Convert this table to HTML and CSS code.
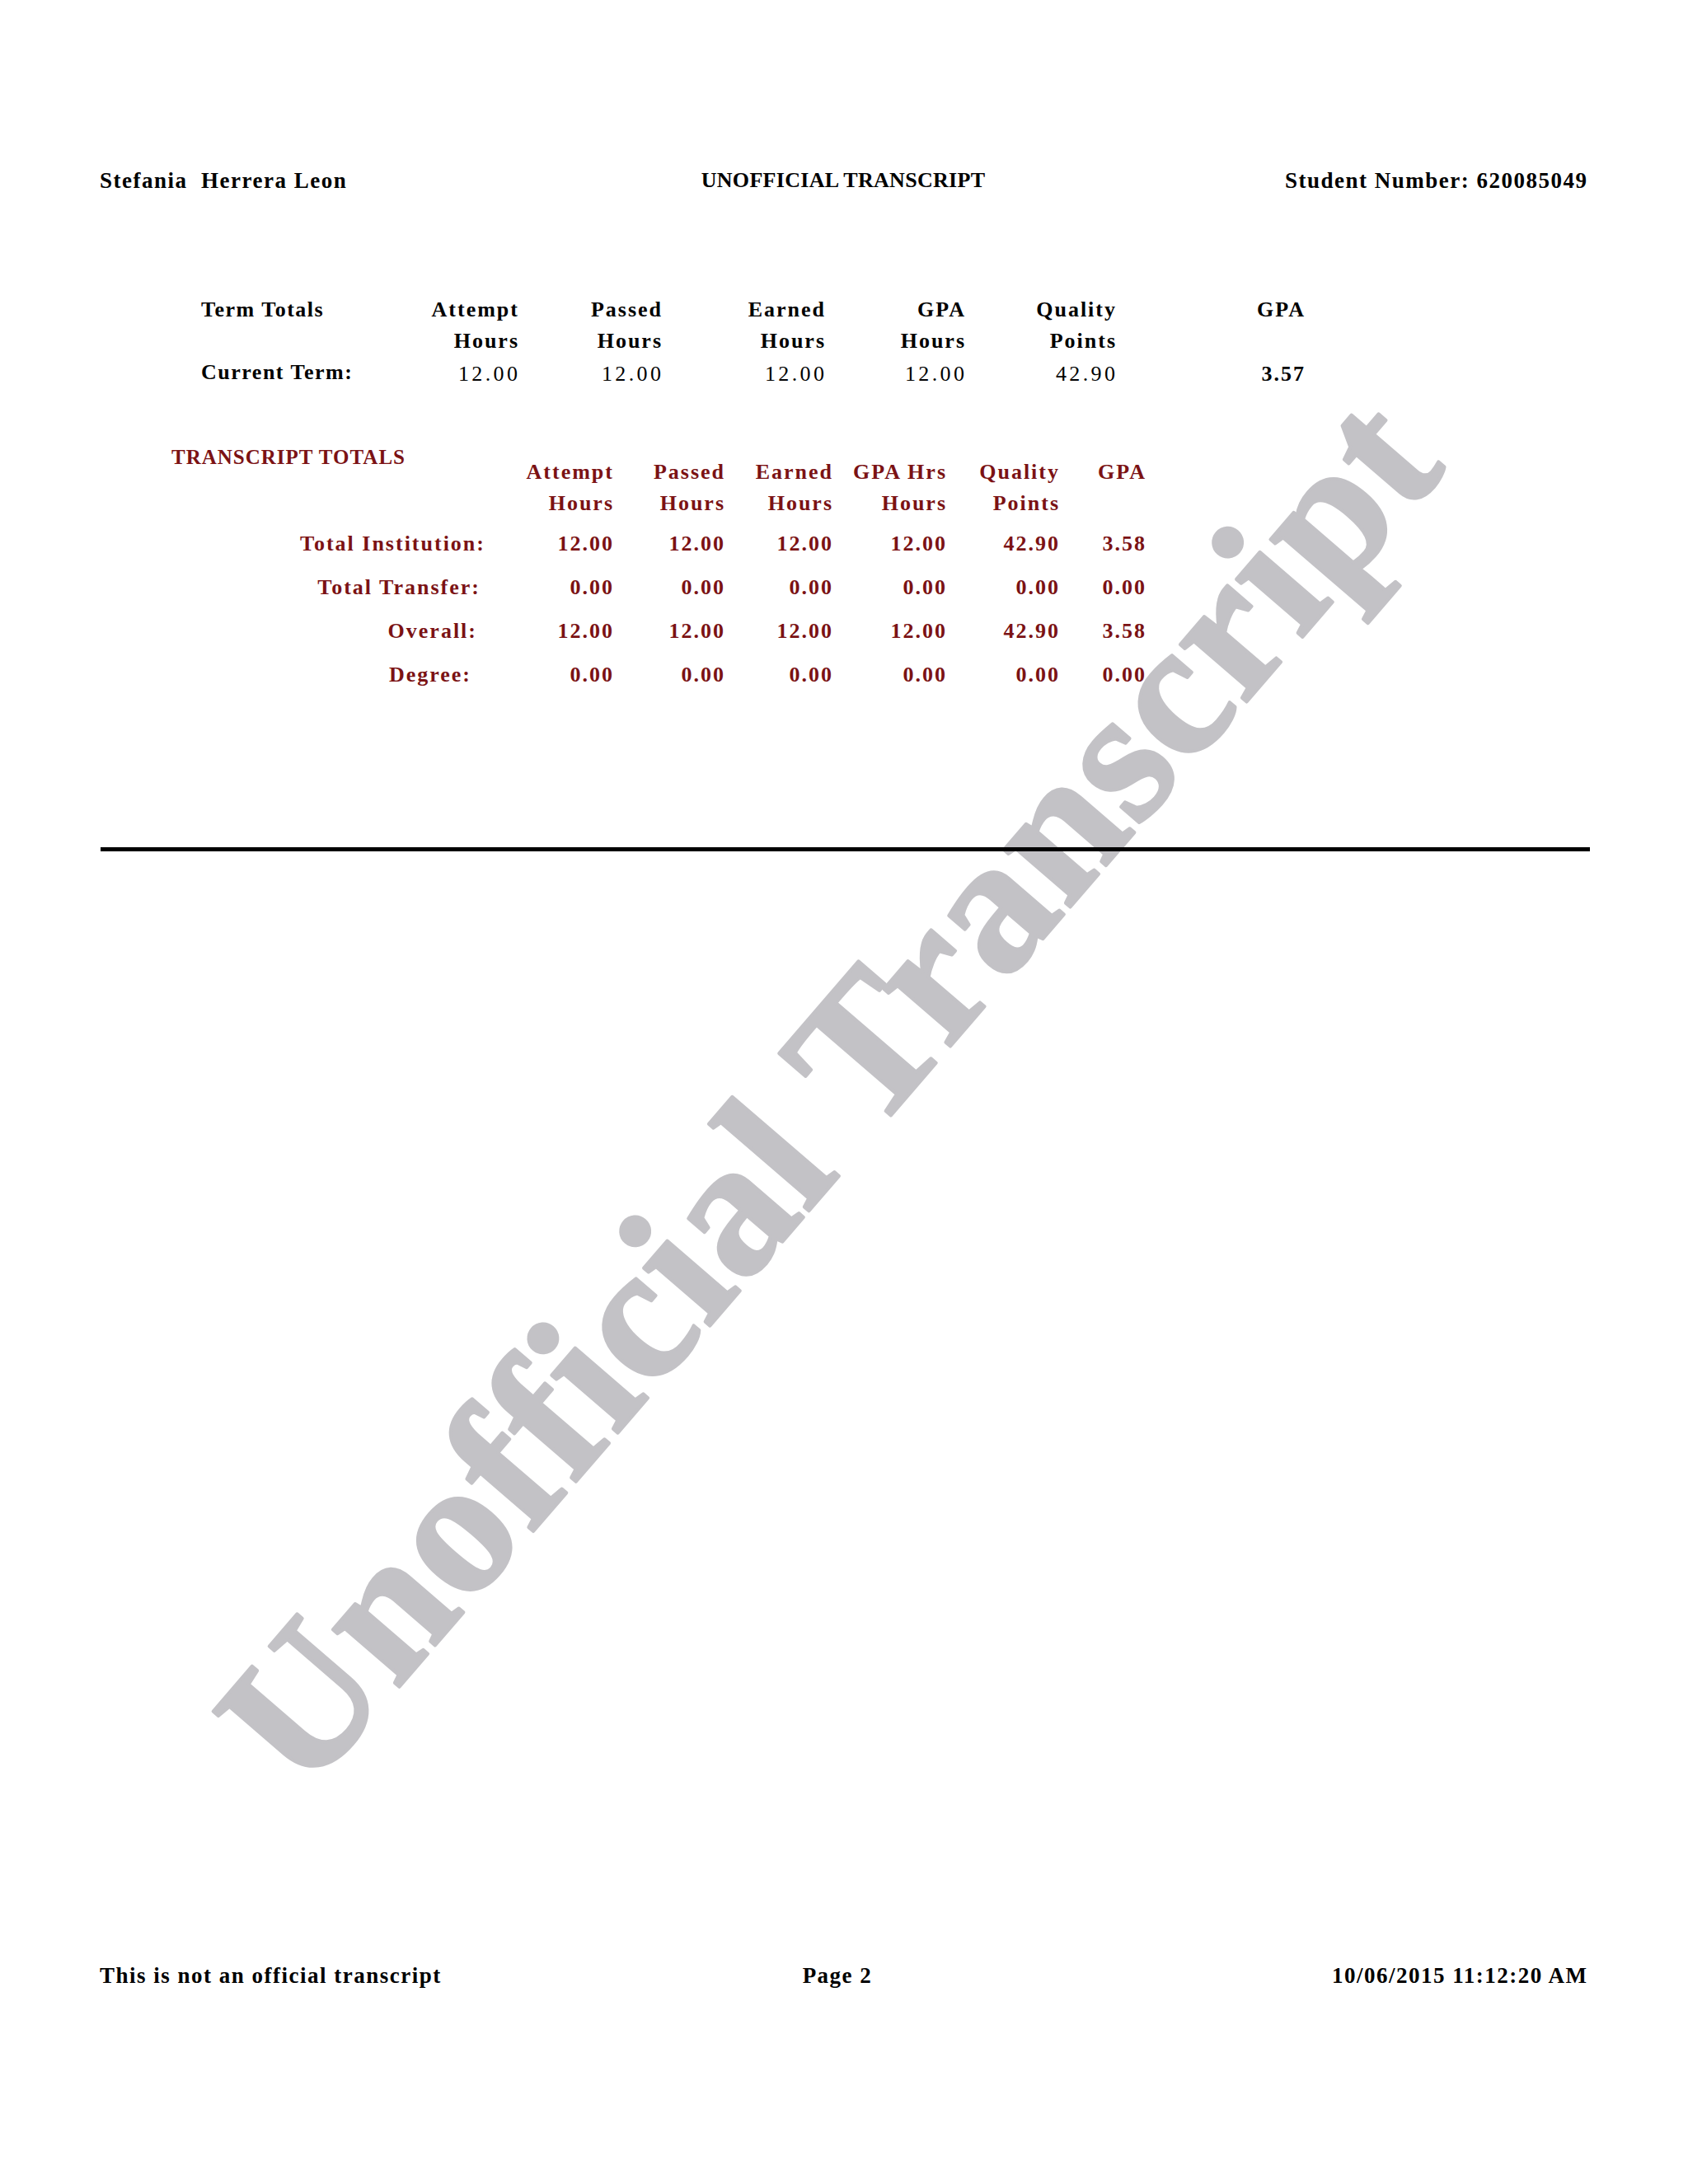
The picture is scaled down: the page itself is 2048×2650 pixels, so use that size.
FILE: index.html
```html
<!DOCTYPE html>
<html lang="en">
<head>
<meta charset="utf-8">
<title>Unofficial Transcript - Page 2</title>
<link rel="stylesheet" href="styles.css">
</head>
<body>
<div class="page">
  <svg class="watermark" width="2048" height="2650" viewBox="0 0 2048 2650" aria-hidden="true">
    <text class="wm-text" x="370" y="2180" transform="rotate(-49.3 370 2180)">Unofficial Transcript</text>
  </svg>

  <header class="page-head">
    <div class="ph-left">Stefania&nbsp; Herrera Leon</div>
    <div class="ph-center">UNOFFICIAL TRANSCRIPT</div>
    <div class="ph-right">Student Number: 620085049</div>
  </header>

  <section class="term">
    <div class="t-label">Term Totals</div>
    <div class="t-head">Attempt<br>Hours</div>
    <div class="t-head">Passed<br>Hours</div>
    <div class="t-head">Earned<br>Hours</div>
    <div class="t-head">GPA<br>Hours</div>
    <div class="t-head">Quality<br>Points</div>
    <div class="t-head">GPA</div>

    <div class="t-label">Current Term:</div>
    <div class="t-num">12.00</div>
    <div class="t-num">12.00</div>
    <div class="t-num">12.00</div>
    <div class="t-num">12.00</div>
    <div class="t-num">42.90</div>
    <div class="t-gpa">3.57</div>
  </section>

  <section class="totals">
    <div class="tt-title">TRANSCRIPT TOTALS</div>
    <div class="tt-head">Attempt<br>Hours</div>
    <div class="tt-head">Passed<br>Hours</div>
    <div class="tt-head">Earned<br>Hours</div>
    <div class="tt-head">GPA Hrs<br>Hours</div>
    <div class="tt-head">Quality<br>Points</div>
    <div class="tt-head">GPA</div>

    <div class="tt-label lbl-inst">Total Institution:</div>
    <div class="tt-num">12.00</div>
    <div class="tt-num">12.00</div>
    <div class="tt-num">12.00</div>
    <div class="tt-num">12.00</div>
    <div class="tt-num">42.90</div>
    <div class="tt-num">3.58</div>

    <div class="tt-label lbl-transfer">Total Transfer:</div>
    <div class="tt-num">0.00</div>
    <div class="tt-num">0.00</div>
    <div class="tt-num">0.00</div>
    <div class="tt-num">0.00</div>
    <div class="tt-num">0.00</div>
    <div class="tt-num">0.00</div>

    <div class="tt-label lbl-overall">Overall:</div>
    <div class="tt-num">12.00</div>
    <div class="tt-num">12.00</div>
    <div class="tt-num">12.00</div>
    <div class="tt-num">12.00</div>
    <div class="tt-num">42.90</div>
    <div class="tt-num">3.58</div>

    <div class="tt-label lbl-degree">Degree:</div>
    <div class="tt-num">0.00</div>
    <div class="tt-num">0.00</div>
    <div class="tt-num">0.00</div>
    <div class="tt-num">0.00</div>
    <div class="tt-num">0.00</div>
    <div class="tt-num">0.00</div>
  </section>

  <div class="rule"></div>

  <footer class="page-foot">
    <div class="ph-left">This is not an official transcript</div>
    <div class="ph-center pf-page">Page 2</div>
    <div class="ph-right">10/06/2015 11:12:20 AM</div>
  </footer>
</div>
</body>
</html>
```

FILE: styles.css
```css
html, body {
  margin: 0;
  padding: 0;
  background: #ffffff;
}

body {
  font-family: "Liberation Serif", "Times New Roman", serif;
  color: #000;
}

.page {
  position: relative;
  width: 2048px;
  height: 2650px;
  padding-top: 203px;
  box-sizing: border-box;
  overflow: hidden;
}

.watermark {
  position: absolute;
  left: 0;
  top: 0;
  pointer-events: none;
}

.wm-text {
  font-family: "Liberation Serif", "Times New Roman", serif;
  font-weight: bold;
  font-size: 232px;
  letter-spacing: 2px;
  fill: #c3c2c6;
  stroke: #c3c2c6;
  stroke-width: 4px;
  stroke-linejoin: round;
}

.page-head,
.page-foot,
.term,
.totals,
.rule {
  position: relative;
}

/* Header / footer */
.page-head,
.page-foot {
  display: grid;
  grid-template-columns: 1fr auto 1fr;
  padding: 0 123px 0 121px;
  font-weight: bold;
  font-size: 27px;
  line-height: 32px;
  letter-spacing: 1.5px;
  white-space: nowrap;
}

.ph-left { justify-self: start; }
.ph-center { justify-self: center; }
.ph-right { justify-self: end; margin-right: -1.5px; }

.page-head .ph-center {
  font-size: 26px;
  letter-spacing: 0.3px;
}

.pf-page {
  margin-right: 14px;
}

/* Term totals */
.term {
  margin-top: 122px;
  padding-left: 244px;
  display: grid;
  grid-template-columns: 200px 184px 174px 198px 170px 183px 229px;
  font-size: 26px;
  line-height: 38px;
  font-weight: bold;
  letter-spacing: 2px;
  white-space: nowrap;
}

.t-label { text-align: left; letter-spacing: 1.5px; }
.t-head { text-align: right; margin-right: -2px; }
.t-num {
  text-align: right;
  font-weight: normal;
  letter-spacing: 3.4px;
  margin-right: -3.4px;
  padding-top: 2px;
}
.t-gpa { text-align: right; margin-right: -2px; padding-top: 2px; }

/* Transcript totals */
.totals {
  margin-top: 63px;
  padding-left: 208px;
  display: grid;
  grid-template-columns: 382px 153px 135px 131px 138px 137px 105px;
  color: #7b1214;
  font-weight: bold;
  font-size: 26px;
  letter-spacing: 2px;
  white-space: nowrap;
}

.tt-title {
  justify-self: start;
  font-size: 25px;
  line-height: 38px;
  letter-spacing: 1px;
}

.tt-head {
  text-align: right;
  line-height: 38px;
  padding-top: 18px;
  padding-bottom: 3px;
  margin-right: -2px;
}

.tt-label {
  text-align: right;
  line-height: 53px;
}

.lbl-inst { padding-right: 1px; }
.lbl-transfer { padding-right: 7px; }
.lbl-overall { padding-right: 11px; }
.lbl-degree { padding-right: 18px; }

.tt-num {
  text-align: right;
  line-height: 53px;
  margin-right: -2px;
}

/* Divider */
.rule {
  margin: 183px 119px 0 122px;
  height: 5px;
  background: #000;
}

.page-foot {
  margin-top: 1348px;
}
```
